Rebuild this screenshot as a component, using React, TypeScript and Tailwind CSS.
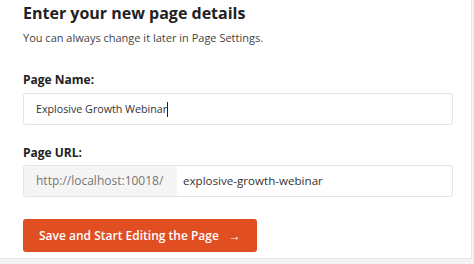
export default function App() {
  return (
    <div className="w-[474px] h-[264px] bg-[#f3f3f3] overflow-hidden" style={{ fontFamily: '"Open Sans", sans-serif' }}>
      <div className="w-[472px] h-[259px] bg-white border-r border-b border-[#e6e6e6] pl-[23px] pr-[18px] pt-[1px]">
        <h1 className="text-[16px] leading-[24px] font-bold text-[#222]">Enter your new page details</h1>
        <p className="mt-[5px] text-[11px] leading-[16px] text-[#444]">You can always change it later in Page Settings.</p>

        <label className="block mt-[25px] text-[12px] leading-[18px] font-bold text-[#222]">Page Name:</label>
        <div className="mt-[4px] w-[430px] h-[32px] border border-[#e4e4e4] rounded-[3px] flex items-center px-[12px] text-[10.7px] text-[#333]">
          <span>Explosive Growth Webinar</span>
          <span className="w-px h-[15px] bg-[#222]" />
        </div>

        <label className="block mt-[19px] text-[12px] leading-[18px] font-bold text-[#222]">Page URL:</label>
        <div className="mt-[3px] w-[430px] h-[32px] border border-[#e4e4e4] rounded-[3px] flex">
          <div className="w-[153px] bg-[#f5f5f5] flex items-center pl-[12px] text-[12px] text-[#777]">http://localhost:10018/</div>
          <div className="flex items-center pl-[6px] text-[11.6px] text-[#333]">explosive-growth-webinar</div>
        </div>

        <button className="mt-[22px] w-[234px] h-[33px] bg-[#e04e22] rounded-[3px] text-white text-[12px] font-semibold flex items-center pl-[16px]">
          Save and Start Editing the Page<span className="ml-[10px]">→</span>
        </button>
      </div>
    </div>
  );
}
